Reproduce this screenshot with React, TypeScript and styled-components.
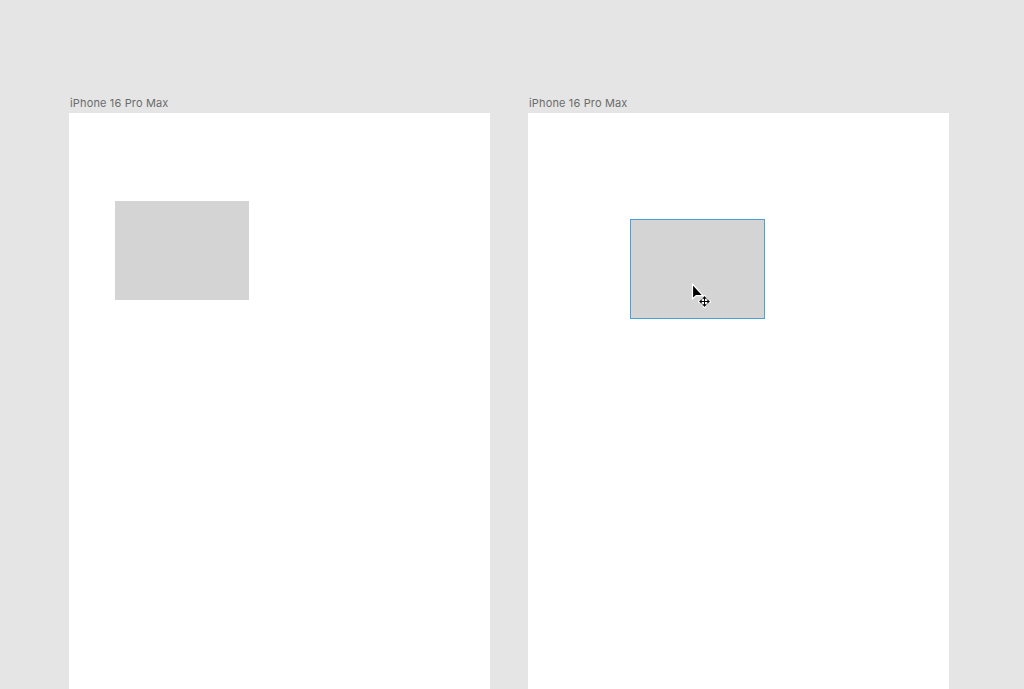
import styled, { createGlobalStyle } from "styled-components";

const GlobalStyle = createGlobalStyle`
    html, body {
        margin: 0;
        padding: 0;
        background: #e5e5e5;
        overflow: hidden;
    }
    body {
        font-family: Inter, "Liberation Sans", sans-serif;
    }
`;

const Canvas = styled.div`
    display: flex;
    flex-direction: row;
    gap: 38px;
    width: 1024px;
    height: 689px;
    box-sizing: border-box;
    padding: 96px 0 0 69px;
    overflow: hidden;
`;

const FrameColumn = styled.div`
    display: flex;
    flex-direction: column;
    width: 421px;
`;

const FrameLabel = styled.div`
    height: 18px;
    line-height: 15px;
    padding-left: 1px;
    font-size: 11px;
    letter-spacing: 0.15px;
    color: #6b6b6b;
    white-space: nowrap;
`;

const Board = styled.div`
    display: flex;
    flex-direction: column;
    align-items: flex-start;
    height: 620px;
    background: #ffffff;
`;

const Shape = styled.div<{ $top: number; $left: number; $selected?: boolean }>`
    position: relative;
    margin: ${(p) => p.$top}px 0 0 ${(p) => p.$left}px;
    width: ${(p) => (p.$selected ? 135 : 134)}px;
    height: ${(p) => (p.$selected ? 100 : 99)}px;
    box-sizing: border-box;
    background: #d4d4d4;
    border: ${(p) => (p.$selected ? "1px solid #4aa0d8" : "none")};
`;

const Cursor = styled.svg`
    position: absolute;
    left: 60px;
    top: 63px;
    overflow: visible;
`;

const MoveCursor = () => (
    <Cursor width="24" height="28" viewBox="0 0 24 28">
        {/* pointer arrow */}
        <path
            d="M1.5 1 L1.5 16 L5 12.6 L12 12.6 Z"
            fill="#000"
            stroke="#fff"
            strokeWidth="1.2"
            strokeLinejoin="round"
        />
        {/* four-way move badge */}
        <g transform="translate(13.5 18.5)">
            <g stroke="#fff" strokeWidth="3" strokeLinecap="round">
                <line x1="-5" y1="0" x2="5" y2="0" />
                <line x1="0" y1="-5" x2="0" y2="5" />
            </g>
            <g stroke="#000" strokeWidth="1">
                <line x1="-4.5" y1="0" x2="4.5" y2="0" />
                <line x1="0" y1="-4.5" x2="0" y2="4.5" />
            </g>
            <g fill="#000">
                <path d="M0 -5.5 L-2.2 -2.8 L2.2 -2.8 Z" />
                <path d="M0 5.5 L-2.2 2.8 L2.2 2.8 Z" />
                <path d="M-5.5 0 L-2.8 -2.2 L-2.8 2.2 Z" />
                <path d="M5.5 0 L2.8 -2.2 L2.8 2.2 Z" />
            </g>
        </g>
    </Cursor>
);

export default function App() {
    return (
        <>
            <GlobalStyle />
            <Canvas>
                <FrameColumn>
                    <FrameLabel>iPhone 16 Pro Max</FrameLabel>
                    <Board>
                        <Shape $top={88} $left={46} />
                    </Board>
                </FrameColumn>
                <FrameColumn>
                    <FrameLabel>iPhone 16 Pro Max</FrameLabel>
                    <Board>
                        <Shape $top={106} $left={102} $selected>
                            <MoveCursor />
                        </Shape>
                    </Board>
                </FrameColumn>
            </Canvas>
        </>
    );
}
